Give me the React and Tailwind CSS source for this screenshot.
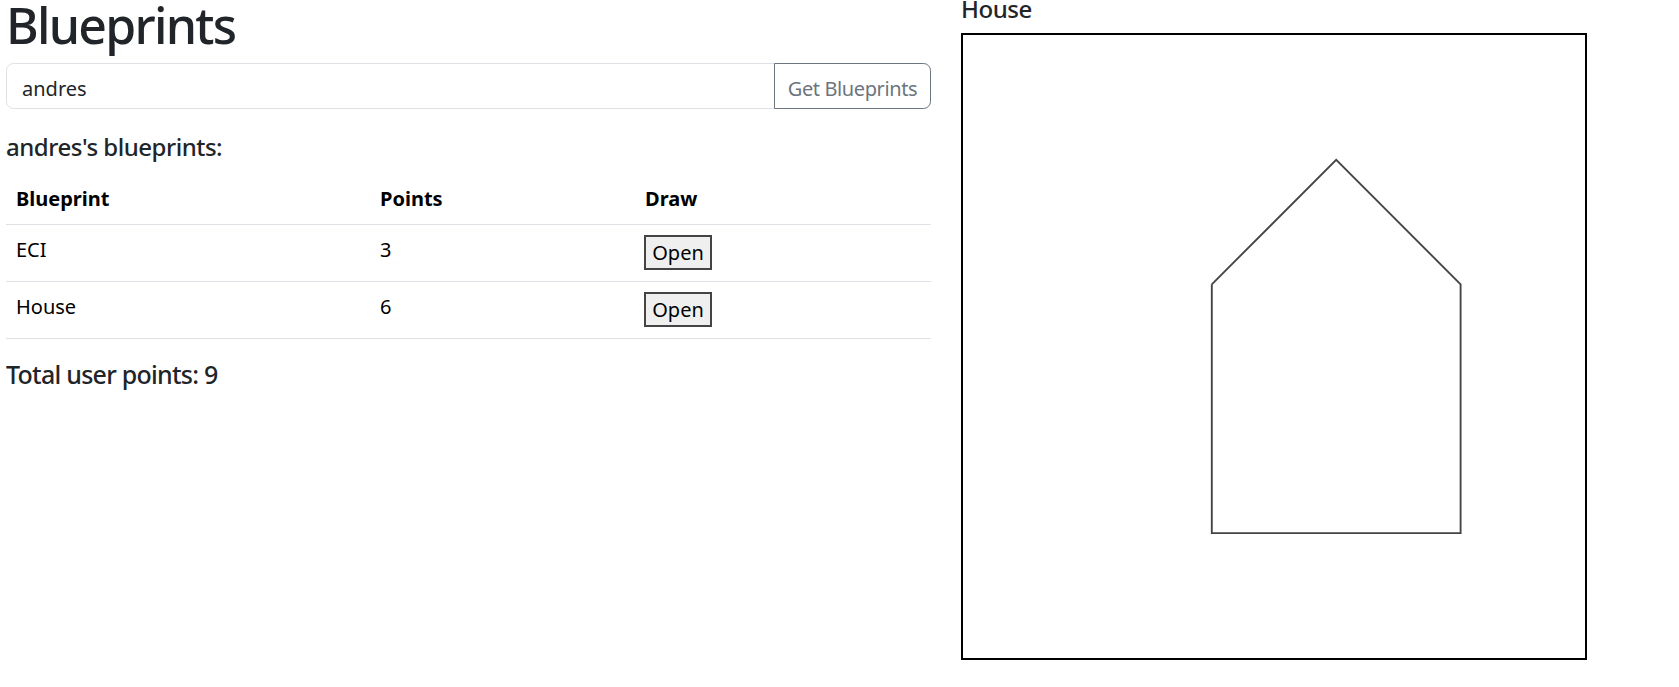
import React, { useState } from 'react';

const blueprints = [
  { name: 'ECI', points: 3 },
  { name: 'House', points: 6 },
];

const housePoints = '200,200 300,100 400,200 400,400 200,400 200,200';

const App = () => {
  const [author, setAuthor] = useState('andres');
  const total = blueprints.reduce((acc, b) => acc + b.points, 0);

  return (
    <div className="min-h-screen bg-white flex font-['Noto_Sans',sans-serif] text-[#212529]">
      <div className="w-[925px] ml-[6px] shrink-0">
        <h1 className="pt-[1px] text-[50px] leading-[48px] font-medium tracking-[-0.035em]">Blueprints</h1>

        <div className="mt-[14px] flex h-[46px]">
          <input
            value={author}
            onChange={(e) => setAuthor(e.target.value)}
            className="flex-1 min-w-0 border border-[#dee2e6] rounded-l-[7.5px] px-[15px] pt-[5px] text-[20px] outline-none"
          />
          <button className="w-[157px] -ml-px border border-[#6c757d] rounded-r-[7.5px] pt-[5px] text-[20px] tracking-[-0.02em] text-[#6c757d] bg-white">
            Get Blueprints
          </button>
        </div>

        <h5 className="mt-[23px] text-[24px] leading-[29px] font-medium tracking-[-0.02em]">
          {author}'s blueprints:
        </h5>

        <table className="mt-[13px] w-full border-collapse text-[20px] leading-[30px] text-black">
          <thead>
            <tr className="border-b border-[#dee2e6]">
              <th className="w-[364px] text-left font-bold px-[10px] pt-[10px] pb-[10px]">Blueprint</th>
              <th className="w-[265px] text-left font-bold px-[10px] pt-[10px] pb-[10px]">Points</th>
              <th className="text-left font-bold px-[10px] pt-[10px] pb-[10px]">Draw</th>
            </tr>
          </thead>
          <tbody>
            {blueprints.map((b) => (
              <tr key={b.name} className="border-b border-[#dee2e6]">
                <td className="align-top px-[10px] pt-[10px] pb-[10px]">{b.name}</td>
                <td className="align-top px-[10px] pt-[10px] pb-[10px]">{b.points}</td>
                <td className="align-top px-[10px] pt-[10px] pb-[11px]">
                  <button className="-ml-px h-[35px] w-[68px] border-2 border-[#444] bg-[#efefef] text-[20px] leading-none text-black">
                    Open
                  </button>
                </td>
              </tr>
            ))}
          </tbody>
        </table>

        <h4 className="mt-[20px] text-[25px] leading-[30px] font-medium tracking-[-0.03em]">
          Total user points: {total}
        </h4>
      </div>

      <div className="ml-[30px]">
        <h3 className="-mt-[6px] text-[24px] leading-[29px] font-medium tracking-[-0.02em]">House</h3>
        <div className="mt-[10px] w-[626px] h-[627px] border-2 border-black bg-white">
          <svg viewBox="0 0 500 500" className="w-full h-full block">
            <polyline
              points={housePoints}
              fill="none"
              stroke="#444"
              strokeWidth="1.5"
            />
          </svg>
        </div>
      </div>
    </div>
  );
};

export default App;
